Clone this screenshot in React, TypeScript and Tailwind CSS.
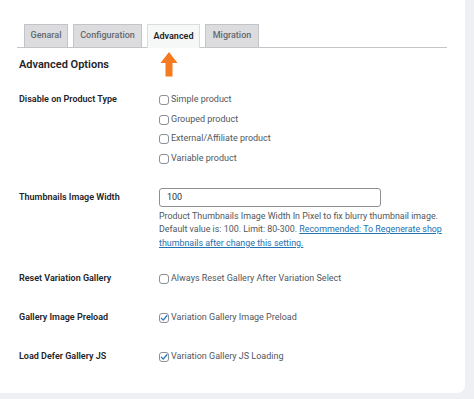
import React from "react";

const font = { fontFamily: 'Roboto, "Noto Sans", sans-serif' };

function Box({ checked }: { checked?: boolean }) {
  return (
    <span className="w-[10px] h-[10px] shrink-0 rounded-[3px] border border-[#8c8f94] bg-white flex items-center justify-center">
      {checked && (
        <svg viewBox="0 0 10 10" className="w-[8px] h-[8px]">
          <path d="M1.6 5.2 L4 7.6 L8.6 2.2" fill="none" stroke="#2271b1" strokeWidth="1.6" strokeLinecap="round" strokeLinejoin="round" />
        </svg>
      )}
    </span>
  );
}

function Check({ label, checked }: { label: string; checked?: boolean }) {
  return (
    <div className="flex items-center gap-[2px] h-[19.7px] text-[9px] text-[#50575e]">
      <Box checked={checked} />
      <span>{label}</span>
    </div>
  );
}

function Label({ children }: { children: React.ReactNode }) {
  return <div className="w-[140px] shrink-0 text-[9px] font-semibold text-[#1d2327] leading-[19.7px]">{children}</div>;
}

export default function App() {
  const tabs: [string, string][] = [
    ["Genaral", "w-[44px]"],
    ["Configuration", "w-[69px]"],
    ["Advanced", "w-[53px]"],
    ["Migration", "w-[54px]"],
  ];
  return (
    <div className="w-[474px] h-[399px] bg-[#eef0f4] overflow-hidden" style={font}>
      <div className="w-[465px] h-[393px] bg-white rounded-br-[8px] relative">
        <div className="ml-[17px] w-[430px] pt-[24px] pl-[7px] flex gap-[5px] border-b border-[#c3c4c7]">
          {tabs.map(([t, w]) => {
            const active = t === "Advanced";
            return (
              <div
                key={t}
                className={
                  active
                    ? `${w} h-[24px] -mb-px flex items-center justify-center text-[9px] font-semibold text-[#1d2327] bg-[#f6f7f7] border border-b-0 border-[#dcdcde]`
                    : `${w} h-[23px] flex items-center justify-center text-[9px] font-medium text-[#646970] bg-[#dcdcde] border border-b-0 border-[#c3c4c7]`
                }
              >
                {t}
              </div>
            );
          })}
        </div>
        <svg className="absolute left-[160px] top-[52px]" width="18" height="25" viewBox="0 0 18 25">
          <path d="M9 0 L17.5 11 L12.5 11 L12.5 24.5 L5.5 24.5 L5.5 11 L0.5 11 Z" fill="#f47b20" />
        </svg>
        <div className="pl-[19px] pr-[20px]">
          <div className="mt-[9px] text-[11px] font-semibold text-[#1d2327] leading-[16px]">Advanced Options</div>
          <div className="flex mt-[17px]">
            <Label>Disable on Product Type</Label>
            <div className="flex flex-col">
              <Check label="Simple product" />
              <Check label="Grouped product" />
              <Check label="External/Affiliate product" />
              <Check label="Variable product" />
            </div>
          </div>
          <div className="flex mt-[19.5px]">
            <div className="w-[140px] shrink-0 text-[9px] font-semibold text-[#1d2327] leading-[19px]">Thumbnails Image Width</div>
            <div className="flex flex-col">
              <div className="w-[222px] h-[19px] border border-[#8c8f94] rounded-[3px] text-[9px] text-[#2c3338] px-[7px] flex items-center">100</div>
              <p className="mt-[2.5px] w-[285px] text-[8.9px] leading-[13.5px] text-[#50575e]">
                Product Thumbnails Image Width In Pixel to fix blurry thumbnail image. Default value is: 100. Limit: 80-300.{" "}
                <span className="text-[#2271b1] underline">Recommended: To Regenerate shop thumbnails after change this setting.</span>
              </p>
            </div>
          </div>
          <div className="flex mt-[19px]">
            <Label>Reset Variation Gallery</Label>
            <Check label="Always Reset Gallery After Variation Select" />
          </div>
          <div className="flex mt-[19.3px]">
            <Label>Gallery Image Preload</Label>
            <Check label="Variation Gallery Image Preload" checked />
          </div>
          <div className="flex mt-[19.3px]">
            <Label>Load Defer Gallery JS</Label>
            <Check label="Variation Gallery JS Loading" checked />
          </div>
        </div>
      </div>
    </div>
  );
}
